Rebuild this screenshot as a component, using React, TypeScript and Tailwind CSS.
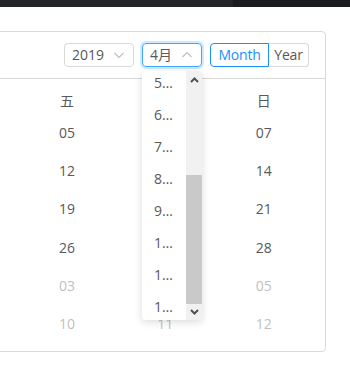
const weekdays = ['一', '二', '三', '四', '五', '六', '日'];
const months = ['1月', '2月', '3月', '4月', '5月', '6月', '7月', '8月', '9月', '10月', '11月', '12月'];

type Cell = { day: number; muted: boolean };

// April 2019 starts on a Monday, so 30 days + 12 days of May fill 6 rows
function buildCells(): Cell[] {
  const cells: Cell[] = [];
  for (let i = 1; i <= 30; i++) cells.push({ day: i, muted: false });
  for (let i = 1; i <= 12; i++) cells.push({ day: i, muted: true });
  return cells;
}

function Chevron({ up = false }: { up?: boolean }) {
  return (
    <svg width="12" height="12" viewBox="0 0 12 12" fill="none">
      <polyline
        points={up ? '1.5,8 6,3.5 10.5,8' : '1.5,4 6,8.5 10.5,4'}
        stroke="#bfbfbf"
        strokeWidth="1.2"
      />
    </svg>
  );
}

function ScrollArrow({ up = false }: { up?: boolean }) {
  return (
    <svg width="9" height="6" viewBox="0 0 9 6" fill="none">
      <polyline
        points={up ? '1,5 4.5,1.5 8,5' : '1,1 4.5,4.5 8,1'}
        stroke="#505050"
        strokeWidth="2"
      />
    </svg>
  );
}

function MonthDropdown() {
  return (
    <div className="absolute left-0 top-full z-10 mt-1 flex h-[249px] w-[60px] overflow-hidden rounded bg-white shadow-[0_2px_8px_rgba(0,0,0,0.15)]">
      <div className="min-w-0 flex-1 overflow-hidden">
        <ul className="-mt-[136px] py-1">
          {months.map((m) => (
            <li key={m} className="h-8 truncate px-3 leading-8">
              {m}
            </li>
          ))}
        </ul>
      </div>
      {/* scrollbar */}
      <div className="flex w-4 flex-col bg-[#f1f1f1]">
        <div className="flex h-4 items-center justify-center pt-[2px]">
          <ScrollArrow up />
        </div>
        <div className="flex flex-1 flex-col">
          <div className="h-[88px]" />
          <div className="flex-1 bg-[#c9c9c9]" />
        </div>
        <div className="flex h-4 items-center justify-center">
          <ScrollArrow />
        </div>
      </div>
    </div>
  );
}

export default function App() {
  const cells = buildCells();

  return (
    <div className="h-[385px] w-[350px] overflow-hidden bg-white font-['Open_Sans','Noto_Sans_CJK_SC',sans-serif] text-sm text-[#595959]">
      {/* dark top strip */}
      <div className="flex h-[7px]">
        <div className="w-[233px] bg-[#232529]" />
        <div className="flex-1 bg-[#1b1c1f]" />
      </div>

      <div className="mt-6 -ml-[389px] w-[715px] rounded border border-[#d9d9d9]">
        {/* Header */}
        <div className="flex justify-end gap-2 border-b border-[#d9d9d9] pt-[11px] pr-4 pb-[11px]">
          <div className="flex h-6 w-[70px] items-center justify-between rounded border border-[#d9d9d9] pl-[7px] pr-2">
            <span>2019</span>
            <Chevron />
          </div>

          <div className="relative">
            <div className="flex h-6 w-[60px] items-center justify-between rounded border border-[#40a9ff] pl-[7px] pr-2 shadow-[0_0_0_2px_rgba(24,144,255,0.2)]">
              <span>4月</span>
              <Chevron up />
            </div>
            <MonthDropdown />
          </div>

          <div className="flex h-6">
            <div className="flex w-[59px] items-center justify-center rounded-l border border-[#1890ff] tracking-[-0.2px] text-[#1890ff]">
              Month
            </div>
            <div className="flex w-10 items-center justify-center rounded-r border border-l-0 border-[#d9d9d9] tracking-[-0.2px]">
              Year
            </div>
          </div>
        </div>

        {/* Body */}
        <div className="px-3 py-2">
          <div className="grid h-[256px] grid-cols-7 grid-rows-[27px_repeat(6,1fr)]">
            {weekdays.map((w) => (
              <div key={w} className="flex items-center justify-center">
                {w}
              </div>
            ))}
            {cells.map((c, i) => (
              <div
                key={i}
                className={`flex items-center justify-center ${c.muted ? 'text-[#bfbfbf]' : ''}`}
              >
                {String(c.day).padStart(2, '0')}
              </div>
            ))}
          </div>
        </div>
      </div>
    </div>
  );
}
